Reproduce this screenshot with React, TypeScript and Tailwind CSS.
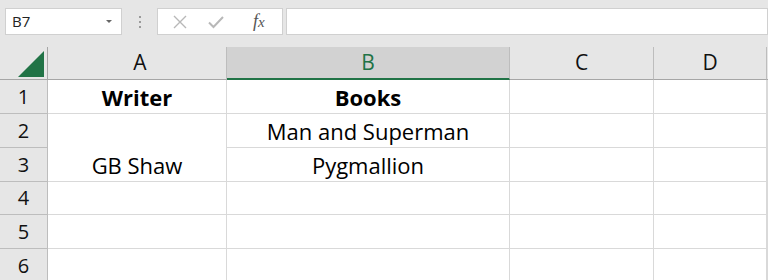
import React from 'react';

const hdr = 'bg-[#e6e6e6] border-r border-b border-[#bdbdbd] flex items-center justify-center text-[20px] text-[#111]';
const cell = 'border-r border-b border-[#d9d9d9] bg-white flex items-end justify-center text-[22px] leading-[26px] pb-[3px] text-black';

const App = () => {
  const rows = [1, 2, 3, 4, 5, 6, 7];

  return (
    <div className="w-[768px] h-[280px] overflow-hidden bg-[#e6e6e6]" style={{ fontFamily: '"Open Sans", "Noto Sans", sans-serif' }}>
      {/* formula bar */}
      <div className="h-[47px] flex items-start pt-[8px] pl-[5px]">
        <div className="w-[117px] h-[27px] bg-white border border-[#d0d0d0] flex items-center justify-between pl-[6px] pr-[9px]">
          <span className="text-[15px] text-[#222]">B7</span>
          <span className="w-0 h-0 border-l-[3px] border-r-[3px] border-t-[3px] border-l-transparent border-r-transparent border-t-[#666]" />
        </div>
        <div className="w-[35px] h-[27px] flex flex-col items-center justify-center gap-[3px]">
          <span className="w-[2px] h-[2px] bg-[#9a9a9a]" />
          <span className="w-[2px] h-[2px] bg-[#9a9a9a]" />
          <span className="w-[2px] h-[2px] bg-[#9a9a9a]" />
        </div>
        <div className="w-[126px] h-[27px] bg-white border border-[#d0d0d0] flex items-center">
          <svg width="14" height="14" viewBox="0 0 14 14" className="ml-[15px]">
            <path d="M1 1L13 13M13 1L1 13" stroke="#b8b8b8" strokeWidth="1.4" fill="none" />
          </svg>
          <svg width="16" height="14" viewBox="0 0 16 14" className="ml-[21px]">
            <path d="M1 7.5L5.5 12L15 2" stroke="#b8b8b8" strokeWidth="2" fill="none" />
          </svg>
          <span className="ml-[29px] text-[18px] italic text-[#555]" style={{ fontFamily: '"Liberation Serif", serif' }}>
            f<span className="text-[15px]">x</span>
          </span>
        </div>
        <div className="ml-[3px] flex-1 h-[27px] bg-white border border-[#d0d0d0]" />
      </div>

      {/* grid */}
      <div className="grid grid-cols-[48px_179px_283px_144px_113px_1fr] grid-rows-[33px_34px_34px_34px_33px_34px_34px]">
        <div className="bg-[#e6e6e6] border-r border-b border-[#a6a6a6] flex items-end justify-end pr-[3px] pb-[2px]">
          <svg width="26" height="26" viewBox="0 0 26 26">
            <path d="M26 0V26H0Z" fill="#217346" />
          </svg>
        </div>
        <div className={`${hdr} text-[21px] pl-[6px] border-b-[#a6a6a6]`}>A</div>
        <div className="bg-[#d2d2d2] border-r border-[#bdbdbd] border-b-2 border-b-[#217346] flex items-center justify-center text-[21px] text-[#217346]">B</div>
        <div className={`${hdr} text-[21px] border-b-[#a6a6a6]`}>C</div>
        <div className={`${hdr} text-[21px] border-b-[#a6a6a6]`}>D</div>
        <div className="bg-[#e6e6e6] border-b border-[#a6a6a6]" />

        {/* row 1 */}
        <div className={hdr}>1</div>
        <div className={`${cell} font-bold`}>Writer</div>
        <div className={`${cell} font-bold`}>Books</div>
        <div className={cell} />
        <div className={cell} />
        <div className={cell} />

        {/* row 2 + merged A2:A3 */}
        <div className={hdr}>2</div>
        <div className={`${cell} row-span-2`}>GB Shaw</div>
        <div className={cell}>Man and Superman</div>
        <div className={cell} />
        <div className={cell} />
        <div className={cell} />

        {/* row 3 */}
        <div className={hdr}>3</div>
        <div className={cell}>Pygmallion</div>
        <div className={cell} />
        <div className={cell} />
        <div className={cell} />

        {rows.slice(3).map((r) => (
          <React.Fragment key={r}>
            <div className={hdr}>{r}</div>
            <div className={cell} />
            <div className={cell} />
            <div className={cell} />
            <div className={cell} />
            <div className={cell} />
          </React.Fragment>
        ))}
      </div>
    </div>
  );
};

export default App;
